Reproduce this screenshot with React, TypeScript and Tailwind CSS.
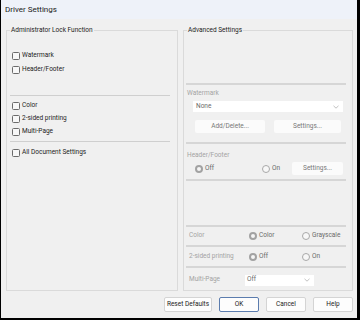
import React from "react";

const font = { fontFamily: "Roboto, 'Noto Sans', sans-serif" };

const Check = ({ label }: { label: string }) => (
  <div className="flex h-[13px] items-center gap-[2px]">
    <span className="h-[8px] w-[8px] rounded-[1.5px] border border-[#6b6b6b] bg-[#f7f7f7]" />
    <span className="text-[6.5px] text-[#1c1c1c]">{label}</span>
  </div>
);

const Radio = ({ label, on }: { label: string; on?: boolean }) => (
  <div className="flex items-center gap-[2px]">
    {on ? (
      <span className="h-[8px] w-[8px] rounded-full border-[2.5px] border-[#a2a2a2] bg-[#f5f5f5]" />
    ) : (
      <span className="h-[8px] w-[8px] rounded-full border border-[#a8a8a8] bg-[#f7f7f7]" />
    )}
    <span className="text-[6.5px] text-[#6a6a6a]">{label}</span>
  </div>
);

const Btn = ({ label, className }: { label: string; className: string }) => (
  <div
    className={`flex items-center justify-center rounded-[2px] bg-[#fbfbfb] text-[6.5px] text-[#777] ${className}`}
  >
    {label}
  </div>
);

const Chevron = () => (
  <svg width="6" height="4" viewBox="0 0 6 4" className="text-[#a8a8a8]">
    <path d="M0.5 0.8 L3 3.2 L5.5 0.8" fill="none" stroke="currentColor" strokeWidth="0.7" />
  </svg>
);

const Group = ({
  title,
  className,
  children,
}: {
  title: string;
  className: string;
  children: React.ReactNode;
}) => (
  <div className={`relative border border-[#dadada] ${className}`}>
    <span className="absolute -top-[5px] left-[3px] bg-[#f0f0f0] px-[1px] text-[6.5px] leading-[9px] text-[#1c1c1c]">
      {title}
    </span>
    {children}
  </div>
);

const Sep = ({ className }: { className: string }) => (
  <div className={`h-[2px] bg-[#d6d6d6] ${className}`} />
);

export default function App() {
  return (
    <div
      style={font}
      className="flex h-[320px] w-[360px] flex-col border-b-2 border-l-[1px] border-r-[3px] border-black bg-[#f0f0f0]"
    >
      <div className="flex h-[19px] items-center bg-[#eef2f9] pl-[4px] text-[8px] text-[#1a1a1a]">
        Driver Settings
      </div>
      <div className="mt-[11px] flex gap-[5px] pl-[5px] pr-[3px]">
        <Group title="Administrator Lock Function" className="h-[261px] w-[172px]">
          <div className="pl-[5px] pt-[18px]">
            <div className="flex flex-col gap-[1px]">
              <Check label="Watermark" />
              <Check label="Header/Footer" />
            </div>
          </div>
          <div className="ml-[3px] mr-[7px] mt-[19px] h-[1px] bg-[#cfcfcf]" />
          <div className="mt-[3px] pl-[5px]">
            <Check label="Color" />
            <Check label="2-sided printing" />
            <Check label="Multi-Page" />
          </div>
          <div className="ml-[3px] mr-[7px] mt-[3px] h-[1px] bg-[#cfcfcf]" />
          <div className="mt-[4px] pl-[5px]">
            <Check label="All Document Settings" />
          </div>
        </Group>

        <Group title="Advanced Settings" className="h-[261px] w-[170px]">
          <Sep className="ml-[2px] mr-[6px] mt-[52px]" />
          <div className="mt-[3px] pl-[3px] text-[6.5px] leading-[10px] text-[#a3a3a3]">
            Watermark
          </div>
          <div className="ml-[9px] mr-[9px] mt-[3px] flex h-[11px] items-center justify-between bg-white pl-[3px] pr-[4px] text-[6.5px] text-[#6a6a6a]">
            <span>None</span>
            <Chevron />
          </div>
          <div className="mt-[8px] flex pl-[11px]">
            <Btn label="Add/Delete..." className="h-[13px] w-[70px]" />
            <Btn label="Settings..." className="ml-[9px] h-[13px] w-[67px]" />
          </div>
          <Sep className="ml-[2px] mr-[6px] mt-[9px]" />
          <div className="mt-[6px] pl-[3px] text-[6.5px] leading-[10px] text-[#a3a3a3]">
            Header/Footer
          </div>
          <div className="mt-[2px] flex h-[13px] items-center pl-[11px]">
            <div className="w-[67px]">
              <Radio label="Off" on />
            </div>
            <div className="w-[30px]">
              <Radio label="On" />
            </div>
            <Btn label="Settings..." className="h-[13px] w-[51px]" />
          </div>
          <Sep className="ml-[2px] mr-[6px] mt-[4px]" />
          <Sep className="ml-[2px] mr-[6px] mt-[44px]" />
          <div className="flex h-[18px] items-center pl-[5px]">
            <span className="w-[60px] text-[6.5px] text-[#a3a3a3]">Color</span>
            <div className="w-[53px]">
              <Radio label="Color" on />
            </div>
            <Radio label="Grayscale" />
          </div>
          <Sep className="ml-[2px] mr-[6px]" />
          <div className="flex h-[19px] items-center pl-[5px]">
            <span className="w-[60px] text-[6.5px] text-[#a3a3a3]">2-sided printing</span>
            <div className="w-[53px]">
              <Radio label="Off" on />
            </div>
            <Radio label="On" />
          </div>
          <Sep className="ml-[2px] mr-[6px]" />
          <div className="flex h-[24px] items-center pl-[5px]">
            <span className="w-[56px] text-[6.5px] text-[#a3a3a3]">Multi-Page</span>
            <div className="flex h-[11px] w-[69px] items-center justify-between bg-white pl-[2px] pr-[4px] text-[6.5px] text-[#6a6a6a]">
              <span>Off</span>
              <Chevron />
            </div>
          </div>
        </Group>
      </div>
      <div className="mt-[6px] flex justify-end gap-[7px] pr-[4px]">
        <div className="flex h-[15px] w-[48px] items-center justify-center rounded-[2px] border border-[#d4d4d4] bg-[#fdfdfd] text-[6.5px] text-[#1c1c1c]">
          Reset Defaults
        </div>
        <div className="flex h-[15px] w-[40px] items-center justify-center rounded-[2px] border border-[#5b7cae] bg-[#fdfdfd] text-[6.5px] text-[#1c1c1c]">
          OK
        </div>
        <div className="flex h-[15px] w-[40px] items-center justify-center rounded-[2px] border border-[#d4d4d4] bg-[#fdfdfd] text-[6.5px] text-[#1c1c1c]">
          Cancel
        </div>
        <div className="flex h-[15px] w-[40px] items-center justify-center rounded-[2px] border border-[#d4d4d4] bg-[#fdfdfd] text-[6.5px] text-[#1c1c1c]">
          Help
        </div>
      </div>
    </div>
  );
}
